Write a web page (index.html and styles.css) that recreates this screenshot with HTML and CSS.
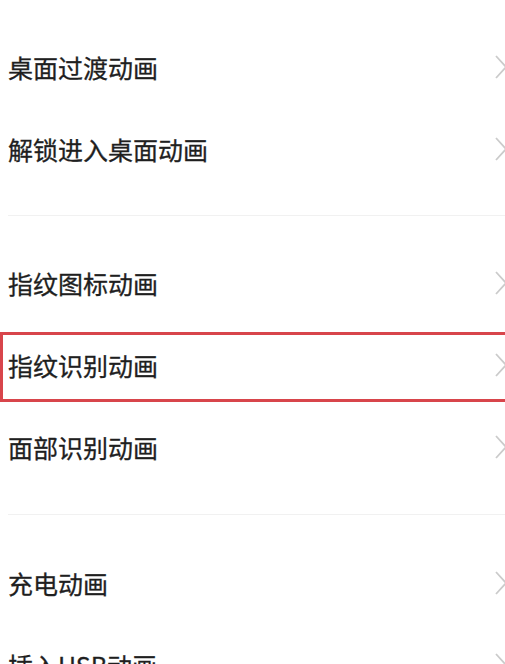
FILE: index.html
```html
<!DOCTYPE html>
<html lang="zh-CN">

<head>
    <meta charset="UTF-8">
    <title>动画设置</title>
    <meta name="viewport" content="width=device-width, initial-scale=1">
    <link rel="stylesheet" href="styles.css">
</head>

<body>

    <div class="settings">
        <div class="group">
            <div class="row">
                <span class="label">桌面过渡动画</span>
                <svg class="chevron" viewBox="0 0 12 24"><polyline points="1,1 11,12 1,23"/></svg>
            </div>
            <div class="row">
                <span class="label">解锁进入桌面动画</span>
                <svg class="chevron" viewBox="0 0 12 24"><polyline points="1,1 11,12 1,23"/></svg>
            </div>
        </div>

        <div class="divider"></div>

        <div class="group">
            <div class="row">
                <span class="label">指纹图标动画</span>
                <svg class="chevron" viewBox="0 0 12 24"><polyline points="1,1 11,12 1,23"/></svg>
            </div>
            <div class="row highlighted">
                <span class="label">指纹识别动画</span>
                <svg class="chevron" viewBox="0 0 12 24"><polyline points="1,1 11,12 1,23"/></svg>
            </div>
            <div class="row">
                <span class="label">面部识别动画</span>
                <svg class="chevron" viewBox="0 0 12 24"><polyline points="1,1 11,12 1,23"/></svg>
            </div>
        </div>

        <div class="divider wide"></div>

        <div class="group">
            <div class="row">
                <span class="label">充电动画</span>
                <svg class="chevron" viewBox="0 0 12 24"><polyline points="1,1 11,12 1,23"/></svg>
            </div>
            <div class="row">
                <span class="label">插入USB动画</span>
                <svg class="chevron" viewBox="0 0 12 24"><polyline points="1,1 11,12 1,23"/></svg>
            </div>
        </div>
    </div>

</body>

</html>
```

FILE: styles.css
```css
* {
    box-sizing: border-box;
}

body {
    margin: 0;
    padding: 0;
    background: #fff;
    font-family: "Noto Sans CJK SC", "Noto Sans", sans-serif;
    color: #1f1f1f;
    overflow: hidden;
}

.settings {
    width: 505px;
    padding-top: 26px;
}

.row {
    height: 82px;
    padding-left: 8px;
    display: flex;
    align-items: center;
    justify-content: space-between;
    position: relative;
}

.label {
    font-size: 25px;
    line-height: 1;
    -webkit-text-stroke: 0.3px #1f1f1f;
}

.chevron {
    width: 12px;
    height: 24px;
    margin-right: -2px;
    fill: none;
    stroke: #cbcbcb;
    stroke-width: 1.8;
}

.divider {
    height: 1px;
    margin: 25px 0 26px 8px;
    background: #f1f1f1;
}

.divider.wide {
    margin-top: 26px;
    margin-bottom: 27px;
}

/* red annotation frame */
.highlighted::after {
    content: "";
    position: absolute;
    top: 8px;
    bottom: 4px;
    left: 0;
    right: -10px;
    border: 3px solid #d8454b;
}
```
